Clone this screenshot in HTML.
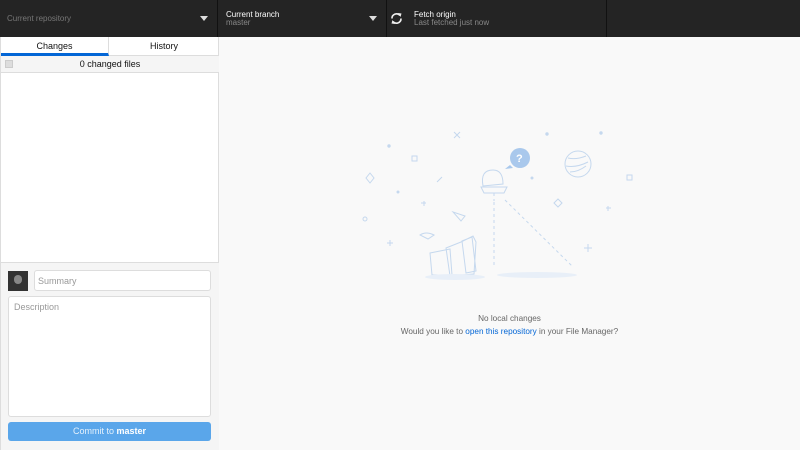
<!DOCTYPE html>
<html><head><style>
*{box-sizing:border-box;margin:0;padding:0}
body{width:800px;height:450px;overflow:hidden;font-family:"Liberation Sans",sans-serif;background:#f9f9f9;position:relative;font-size:9px}
.tb{position:absolute;left:0;top:0;width:800px;height:37px;background:#242424}
.sec{position:absolute;top:0;height:37px;border-right:1px solid #111}
.tri{position:absolute;width:0;height:0;border-left:4px solid transparent;border-right:4px solid transparent;border-top:5px solid #ddd;top:16px}
.t1{color:#fff;font-size:8px;position:absolute}
.t2{color:#888;font-size:8px;position:absolute}
.left{position:absolute;left:0;top:37px;width:219px;height:413px;background:#fff;border-right:1px solid #ddd;border-left:1px solid #ddd}
.tab{position:absolute;top:0;height:19px;text-align:center;line-height:18px;font-size:9px;color:#111}
</style></head><body>
<div class="tb">
 <div class="sec" style="left:0;width:218px"><span class="t2" style="left:7px;top:14px;color:#777">Current repository</span><div class="tri" style="left:200px"></div></div>
 <div class="sec" style="left:218px;width:169px"><span class="t1" style="left:8px;top:10px">Current branch</span><span class="t2" style="left:8px;top:18px">master</span><div class="tri" style="left:151px"></div></div>
 <div class="sec" style="left:387px;width:220px">
  <svg style="position:absolute;left:3px;top:12px" width="13" height="13" viewBox="0 0 13 13"><path d="M2 6.5A4.5 4.5 0 0 1 10 3.5M11 6.5A4.5 4.5 0 0 1 3 9.5" stroke="#eee" stroke-width="1.6" fill="none"/><path d="M8 1L11.5 1.5L10.5 5Z M5 12L1.5 11.5L2.5 8Z" fill="#eee"/></svg>
  <span class="t1" style="left:27px;top:10px">Fetch origin</span><span class="t2" style="left:27px;top:18px">Last fetched just now</span></div>
</div>
<div class="left">
 <div class="tab" style="left:0;width:108px;border-bottom:3px solid #0366d6;border-right:1px solid #ddd">Changes</div>
 <div class="tab" style="left:108px;width:110px;border-bottom:1px solid #ddd">History</div>
 <div style="position:absolute;top:19px;left:0;width:218px;height:17px;background:#f5f5f5;border-bottom:1px solid #ddd;text-align:center;line-height:16px;font-size:9px;color:#111">0 changed files
  <div style="position:absolute;left:4px;top:4px;width:8px;height:8px;background:#ddd;border:1px solid #ccc"></div></div>
 <div style="position:absolute;top:225px;left:0;width:218px;height:188px;background:#f5f5f5;border-top:1px solid #ddd">
  <div style="position:absolute;left:7px;top:8px;width:20px;height:20px;background:#333"><div style="margin:4px 6px;width:8px;height:9px;background:#888;border-radius:4px"></div></div>
  <div style="position:absolute;left:33px;top:7px;width:177px;height:21px;background:#fff;border:1px solid #ddd;border-radius:3px;color:#999;padding:5px 3px">Summary</div>
  <div style="position:absolute;left:7px;top:33px;width:203px;height:121px;background:#fff;border:1px solid #ddd;border-radius:3px;color:#999;padding:5px 5px">Description</div>
  <div style="position:absolute;left:7px;top:159px;width:203px;height:19px;background:#5aa6ea;border-radius:3px;color:#e5f1fc;text-align:center;line-height:19px">Commit to <b style="color:#fff">master</b></div>
 </div>
</div>
<svg style="position:absolute;left:350px;top:120px" width="300" height="170" viewBox="0 0 300 170" fill="none" stroke="#c5d8ee" stroke-width="1">
 <path d="M104 12l6 6M110 12l-6 6"/><rect x="62" y="36" width="5" height="5"/><rect x="277" y="55" width="5" height="5"/>
 <path d="M20 53l4 5-4 5-4-5z M208 79l4 4-4 4-4-4z"/><circle cx="15" cy="99" r="2"/><path d="M92 57l-5 5"/>
 <circle cx="39" cy="26" r="1.2" fill="#c5d8ee"/><circle cx="197" cy="14" r="1.2" fill="#c5d8ee"/><circle cx="251" cy="13" r="1.2" fill="#c5d8ee"/><circle cx="48" cy="72" r="1" fill="#c5d8ee"/><circle cx="182" cy="58" r="1" fill="#c5d8ee"/>
 <path d="M40 120v6M37 123h6M74 81v5M71 83h5M258 86v5M256 88h5M238 124v8M234 128h8"/>
 <circle cx="228" cy="44" r="13"/><path d="M218 38q8 2 18-2M216 46q10 2 22-4M220 52q8 0 16-6"/>
 <circle cx="170" cy="38" r="10" fill="#a9c8ec" stroke="none"/><path d="M160 45l-5 4 8-1z" fill="#a9c8ec" stroke="none"/><text x="166" y="42" font-size="11" fill="#fff" stroke="none" font-family="Liberation Sans" font-weight="bold">?</text>
 <path d="M133 66q-3-16 10-16q10 0 10 14z"/><path d="M131 67h26l-3 6h-20z"/><path d="M144 73v8M144 82v64M155 80l67 66" stroke-dasharray="3 3"/>
 <path d="M103 92l12 4-4 5z"/><path d="M70 115q6-4 14 0l-6 4z"/>
 <path d="M80 133l20-4 2 26-20 0zM96 128l15-6 12-6 3 6-2 32-24 2zM112 121l10-4 4 34-10 2z"/>
 <ellipse cx="105" cy="157" rx="30" ry="3" fill="#e8eff8" stroke="none"/><ellipse cx="187" cy="155" rx="40" ry="3" fill="#e8eff8" stroke="none"/>
</svg>
<div style="position:absolute;left:219px;top:314px;width:581px;text-align:center;color:#666;font-size:8.2px">No local changes</div>
<div style="position:absolute;left:219px;top:327px;width:581px;text-align:center;color:#666;font-size:8.2px">Would you like to <span style="color:#0366d6">open this repository</span> in your File Manager?</div>
</body></html>
